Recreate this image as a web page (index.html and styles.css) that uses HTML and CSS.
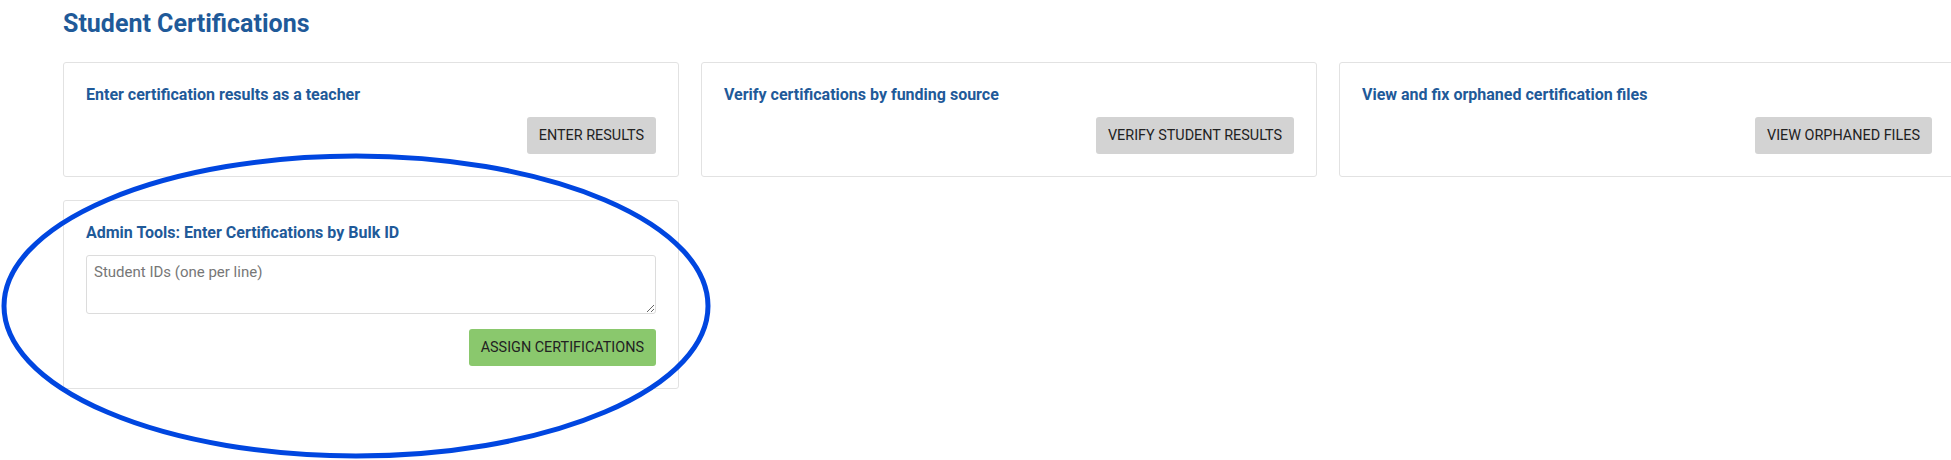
FILE: index.html
```html
<!DOCTYPE html>
<html lang="en">

<head>
  <meta charset="UTF-8">
  <meta name="viewport" content="width=device-width, initial-scale=1.0">
  <title>Student Certifications</title>
  <link rel="stylesheet" href="styles.css">
</head>

<body>
  <div class="page">
    <h1 class="page-title">Student Certifications</h1>

    <div class="card-grid">
      <div class="card">
        <h3 class="card-title">Enter certification results as a teacher</h3>
        <div class="card-actions">
          <button type="button" class="btn">Enter Results</button>
        </div>
      </div>

      <div class="card">
        <h3 class="card-title">Verify certifications by funding source</h3>
        <div class="card-actions">
          <button type="button" class="btn">Verify Student Results</button>
        </div>
      </div>

      <div class="card">
        <h3 class="card-title">View and fix orphaned certification files</h3>
        <div class="card-actions">
          <button type="button" class="btn">View Orphaned Files</button>
        </div>
      </div>

      <div class="card">
        <h3 class="card-title">Admin Tools: Enter Certifications by Bulk ID</h3>
        <textarea class="id-input" placeholder="Student IDs (one per line)"></textarea>
        <div class="card-actions">
          <button type="button" class="btn btn-success">Assign Certifications</button>
        </div>
      </div>
    </div>

    <!-- annotation circle around the admin tools card -->
    <svg class="highlight" width="720" height="314" viewBox="0 0 720 314">
      <ellipse cx="356" cy="160" rx="352" ry="150" />
    </svg>
  </div>
</body>

</html>
```

FILE: styles.css
```css
* {
  margin: 0;
  padding: 0;
  box-sizing: border-box;
}

html,
body {
  height: 100%;
}

html {
  overflow: hidden;
}

body {
  font-family: Roboto, 'Liberation Sans', Arial, sans-serif;
  background: #fff;
  color: #222;
}

.page {
  position: relative;
  min-height: 100%;
  padding: 9px 0 0 63px;
}

.page-title {
  font-size: 25px;
  font-weight: 700;
  line-height: 30px;
  color: #1f5a99;
  margin-bottom: 23px;
}

.card-grid {
  display: grid;
  grid-template-columns: repeat(3, 616px);
  column-gap: 22px;
  row-gap: 23px;
  align-items: start;
}

.card {
  border: 1px solid #e2e2e2;
  border-radius: 3px;
  padding: 22px;
  background: #fff;
}

.card-title {
  font-size: 16px;
  font-weight: 700;
  line-height: 19px;
  color: #1f5a99;
  margin-bottom: 13px;
}

.card-actions {
  display: flex;
  justify-content: flex-end;
}

.btn {
  font-family: inherit;
  font-size: 0.9rem;
  line-height: 19px;
  height: 37px;
  text-transform: uppercase;
  color: #222;
  background: #d3d3d3;
  border: none;
  border-radius: 3px;
  padding: 9px 12px;
  cursor: pointer;
}

.btn-success {
  background: #8ac86d;
}

.id-input {
  display: block;
  width: 100%;
  height: 59px;
  margin: 2px 0 15px;
  padding: 6px 7px;
  font-family: inherit;
  font-size: 15px;
  line-height: 21px;
  color: #333;
  border: 1px solid #dcdcdc;
  border-radius: 3px;
  resize: vertical;
}

.id-input::placeholder {
  color: #777;
}

.highlight {
  position: absolute;
  left: 0;
  top: 146px;
  pointer-events: none;
}

.highlight ellipse {
  fill: none;
  stroke: #0046e0;
  stroke-width: 5;
}
```
